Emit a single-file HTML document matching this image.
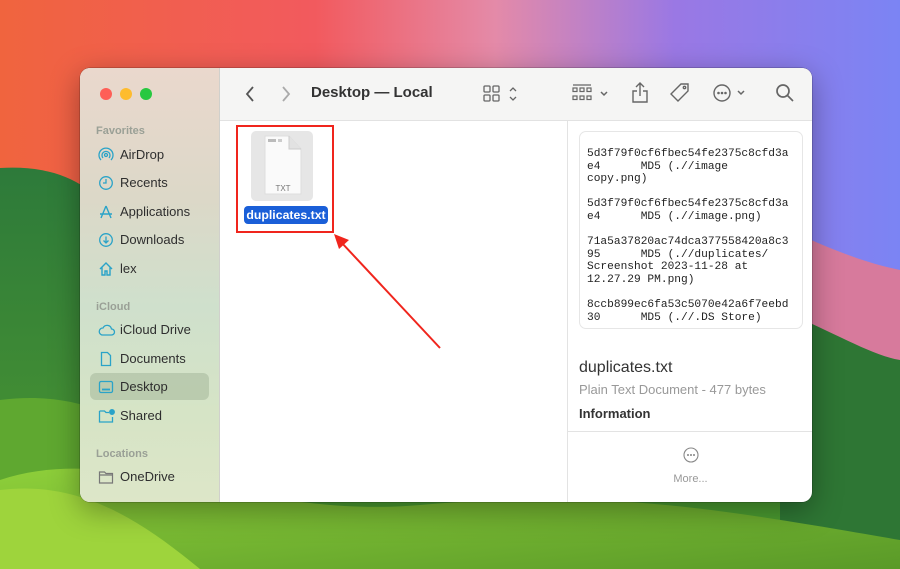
<!DOCTYPE html>
<html><head><meta charset="utf-8"><style>
*{margin:0;padding:0;box-sizing:border-box}
body{width:900px;height:569px;overflow:hidden;position:relative;font-family:"Liberation Sans",sans-serif;background:#3d8a3a}
#bg{position:absolute;left:0;top:0}
.win{position:absolute;left:80px;top:68px;width:732px;height:434px;border-radius:10px;overflow:hidden;background:#fff;box-shadow:0 8px 30px rgba(0,0,0,.35),0 0 0 .5px rgba(0,0,0,.3)}
.side{position:absolute;left:0;top:0;width:140px;height:434px;background:linear-gradient(180deg,#ead8cd 0%,#dcd8c8 30%,#cfe0cc 55%,#d6e4c6 80%,#dde6c8 100%);border-right:1px solid #d0d0cc}
.tb{position:absolute;left:140px;top:0;right:0;height:53px;background:#f5f5f4;border-bottom:1px solid #e2e2e2}
.dot{position:absolute;top:20px;width:12px;height:12px;border-radius:50%}
.sh{position:absolute;left:16px;font-size:11px;color:#9aa096;font-weight:bold}
.it{position:absolute;left:18px;font-size:13px;color:#2e2e2e;height:20px;line-height:20px}
.it svg{position:absolute;left:0;top:2px}
.it span{position:absolute;left:22px;white-space:nowrap}
.sel{position:absolute;left:10px;top:305px;width:119px;height:27px;background:rgba(120,140,110,.28);border-radius:6px}
.title{position:absolute;left:231px;top:16px;font-size:15px;font-weight:bold;color:#333}
.ic{position:absolute}
.prev{position:absolute;left:487px;top:53px;right:0;bottom:0;border-left:1px solid #e3e3e3}
.box{position:absolute;left:11px;top:10px;width:224px;height:198px;border:1px solid #e6e6e6;border-radius:7px;overflow:hidden;background:#fff}
.box pre{position:absolute;left:7px;top:16px;font-family:"Liberation Mono",monospace;font-size:11.2px;line-height:12.6px;color:#222}
</style></head><body>
<svg id="bg" width="900" height="569" viewBox="0 0 900 569">
<defs>
<linearGradient id="sky" x1="0" y1="0" x2="1" y2="0"><stop offset="0" stop-color="#f0643e"/><stop offset=".35" stop-color="#f25a5e"/><stop offset=".55" stop-color="#e48aa8"/><stop offset=".75" stop-color="#9a78e4"/><stop offset="1" stop-color="#7b84f4"/></linearGradient>
<linearGradient id="g1" x1="0" y1="0" x2="0" y2="1"><stop offset="0" stop-color="#2d7a3a"/><stop offset="1" stop-color="#4f9a30"/></linearGradient>
<linearGradient id="g2" x1="0" y1="0" x2="1" y2="1"><stop offset="0" stop-color="#8ecf3a"/><stop offset="1" stop-color="#5a9a28"/></linearGradient>
</defs>
<rect width="900" height="569" fill="url(#sky)"/>
<path d="M700 180 C780 230 850 260 900 270 L900 420 L700 420Z" fill="#d77a9c"/>
<rect x="0" y="400" width="900" height="169" fill="#4a9a30"/>
<path d="M0 168 C50 165 80 180 100 200 L100 569 L0 569Z" fill="url(#g1)"/>
<path d="M780 310 C830 330 870 355 900 360 L900 569 L780 569Z" fill="#2e7634"/>
<path d="M0 400 C40 395 70 400 100 410 L100 569 L0 569Z" fill="#5fa830"/>
<path d="M0 480 C120 440 250 520 420 505 C600 490 700 505 900 540 L900 569 L0 569Z" fill="url(#g2)"/>
<path d="M0 490 C80 480 140 520 200 569 L0 569Z" fill="#9ed43c"/>
</svg>
<div class="win">
<div class="side">
<div class="dot" style="left:20px;background:#fe5f57"></div>
<div class="dot" style="left:40px;background:#febc2e"></div>
<div class="dot" style="left:60px;background:#28c840"></div>
<div class="sh" style="top:57px">Favorites</div>
<div class="it" style="top:77px"><svg width="16" height="16" viewBox="0 0 16 16" fill="none" stroke="#2aa3c8" stroke-width="1.3"><circle cx="8" cy="8" r="1.5"/><path d="M5 11a4 4 0 1 1 6 0M3 13a7 7 0 1 1 10 0"/></svg><span>AirDrop</span></div>
<div class="it" style="top:105px"><svg width="16" height="16" viewBox="0 0 16 16" fill="none" stroke="#2aa3c8" stroke-width="1.3"><circle cx="8" cy="8" r="6.3"/><path d="M8 4v4H5"/></svg><span>Recents</span></div>
<div class="it" style="top:134px"><svg width="16" height="16" viewBox="0 0 16 16" fill="none" stroke="#2aa3c8" stroke-width="1.4"><path d="M8 2L3 14M8 2l5 12M2 10h12"/></svg><span>Applications</span></div>
<div class="it" style="top:162px"><svg width="16" height="16" viewBox="0 0 16 16" fill="none" stroke="#2aa3c8" stroke-width="1.3"><circle cx="8" cy="8" r="6.3"/><path d="M8 4.5v6M5.5 8.5L8 11l2.5-2.5"/></svg><span>Downloads</span></div>
<div class="it" style="top:191px"><svg width="16" height="16" viewBox="0 0 16 16" fill="none" stroke="#2aa3c8" stroke-width="1.4"><path d="M2 8L8 2l6 6M4 6.5V14h3v-4h2v4h3V6.5"/></svg><span>lex</span></div>
<div class="sh" style="top:233px">iCloud</div>
<div class="it" style="top:252px"><svg width="18" height="16" viewBox="0 0 18 16" fill="none" stroke="#2aa3c8" stroke-width="1.3"><path d="M4.5 13h9a3 3 0 0 0 0-6 4.5 4.5 0 0 0-8.5-1A3.5 3.5 0 0 0 4.5 13z"/></svg><span>iCloud Drive</span></div>
<div class="it" style="top:281px"><svg width="16" height="16" viewBox="0 0 16 16" fill="none" stroke="#2aa3c8" stroke-width="1.3"><path d="M3.5 1.5h6l3 3v10h-9z"/></svg><span>Documents</span></div>
<div class="sel"></div>
<div class="it" style="top:309px"><svg width="16" height="16" viewBox="0 0 16 16" fill="none" stroke="#2aa3c8" stroke-width="1.3"><rect x="1.5" y="2.5" width="13" height="11" rx="1.5"/><path d="M4 10.5h8" stroke-width="1.8"/></svg><span>Desktop</span></div>
<div class="it" style="top:338px"><svg width="18" height="16" viewBox="0 0 18 16" fill="none" stroke="#2aa3c8" stroke-width="1.3"><path d="M1.5 3h5l1.5 1.5H11M1.5 3v11h13V9"/><circle cx="14" cy="4" r="2.3" fill="#2aa3c8"/></svg><span>Shared</span></div>
<div class="sh" style="top:380px">Locations</div>
<div class="it" style="top:399px"><svg width="16" height="16" viewBox="0 0 16 16" fill="none" stroke="#777" stroke-width="1.2"><path d="M1.5 3h5l1.5 1.5h6.5V14h-13zM1.5 6h13"/></svg><span>OneDrive</span></div>
</div>
<div class="tb"></div>
<svg class="ic" style="left:164px;top:16px" width="12" height="20" viewBox="0 0 12 20" fill="none" stroke="#555" stroke-width="1.8"><path d="M9 3L3 10l6 7"/></svg>
<svg class="ic" style="left:200px;top:16px" width="12" height="20" viewBox="0 0 12 20" fill="none" stroke="#aaa" stroke-width="1.8"><path d="M3 3l6 7-6 7"/></svg>
<div class="title">Desktop — Local</div>
<svg class="ic" style="left:403px;top:16px" width="40" height="20" viewBox="0 0 40 20" fill="none" stroke="#666" stroke-width="1.3"><rect x="1" y="2" width="6" height="6" rx="1"/><rect x="10" y="2" width="6" height="6" rx="1"/><rect x="1" y="11" width="6" height="6" rx="1"/><rect x="10" y="11" width="6" height="6" rx="1"/><path d="M27 7l3-3 3 3M27 13l3 3 3-3"/></svg>
<svg class="ic" style="left:492px;top:16px" width="40" height="20" viewBox="0 0 40 20" fill="none" stroke="#666" stroke-width="1.2"><path d="M1 1h18"/><rect x="1" y="4" width="4" height="3.5"/><rect x="8" y="4" width="4" height="3.5"/><rect x="15" y="4" width="4" height="3.5"/><rect x="1" y="12" width="4" height="3.5"/><rect x="8" y="12" width="4" height="3.5"/><rect x="15" y="12" width="4" height="3.5"/><path d="M29 8l3 3 3-3" stroke-width="1.5"/></svg>
<svg class="ic" style="left:550px;top:13px" width="20" height="24" viewBox="0 0 20 24" fill="none" stroke="#666" stroke-width="1.4"><path d="M10 2v13M6 6l4-4 4 4M7 10H3v11h14V10h-4"/></svg>
<svg class="ic" style="left:589px;top:14px" width="22" height="22" viewBox="0 0 22 22" fill="none" stroke="#666" stroke-width="1.4"><path d="M12 2h7v7L9 19 2 12z"/><circle cx="15.5" cy="5.5" r="1.2"/></svg>
<svg class="ic" style="left:632px;top:15px" width="40" height="20" viewBox="0 0 40 20" fill="none" stroke="#666" stroke-width="1.4"><circle cx="10" cy="10" r="8"/><circle cx="6.5" cy="10" r=".6" fill="#666"/><circle cx="10" cy="10" r=".6" fill="#666"/><circle cx="13.5" cy="10" r=".6" fill="#666"/><path d="M26 8l3 3 3-3" stroke-width="1.5"/></svg>
<svg class="ic" style="left:695px;top:15px" width="20" height="20" viewBox="0 0 20 20" fill="none" stroke="#666" stroke-width="1.7"><circle cx="8" cy="8" r="6"/><path d="M12.5 12.5L18 18"/></svg>
<div style="position:absolute;left:171px;top:63px;width:62px;height:70px;background:#e6e6e6;border-radius:5px"></div>
<svg class="ic" style="left:183px;top:66px" width="40" height="64" viewBox="0 0 40 64"><path d="M2 2h24l12 13v45H2z" fill="#fafafa" stroke="#ddd"/><path d="M26 2v13h12" fill="#e2e2e2" stroke="#ccc"/><rect x="5" y="5" width="8" height="3" fill="#bbb"/><rect x="15" y="5" width="4" height="3" fill="#ccc"/><text x="20" y="57" font-size="8" text-anchor="middle" fill="#777" font-family="Liberation Sans">TXT</text></svg>
<div style="position:absolute;left:164px;top:138px;width:84px;height:18px;background:#1a5fd8;border-radius:4px;color:#fff;font-size:12.3px;font-weight:bold;text-align:center;line-height:18px;white-space:nowrap">duplicates.txt</div>
<div style="position:absolute;left:156px;top:57px;width:98px;height:108px;border:2px solid #f0251d"></div>
<svg class="ic" style="left:240px;top:160px" width="130" height="125" viewBox="0 0 130 125"><path d="M120 120L21 14" stroke="#f0251d" stroke-width="2"/><path d="M14 6l15 6-10 9z" fill="#f0251d"/></svg>
<div class="prev">
<div class="box"><pre>5d3f79f0cf6fbec54fe2375c8cfd3a
e4      MD5 (.//image
copy.png)

5d3f79f0cf6fbec54fe2375c8cfd3a
e4      MD5 (.//image.png)

71a5a37820ac74dca377558420a8c3
95      MD5 (.//duplicates/
Screenshot 2023-11-28 at
12.27.29 PM.png)

8ccb899ec6fa53c5070e42a6f7eebd
30      MD5 (.//.DS Store)</pre></div>
<div style="position:absolute;left:11px;top:238px;font-size:16px;color:#333">duplicates.txt</div>
<div style="position:absolute;left:11px;top:261px;font-size:13px;color:#999">Plain Text Document - 477 bytes</div>
<div style="position:absolute;left:11px;top:285px;font-size:13px;font-weight:bold;color:#333">Information</div>
<div style="position:absolute;left:0;right:0;top:310px;border-top:1px solid #e3e3e3"></div>
<svg class="ic" style="left:115px;top:326px" width="16" height="16" viewBox="0 0 16 16" fill="none" stroke="#888" stroke-width="1.1"><circle cx="8" cy="8" r="7"/><circle cx="5" cy="8" r=".5" fill="#888"/><circle cx="8" cy="8" r=".5" fill="#888"/><circle cx="11" cy="8" r=".5" fill="#888"/></svg>
<div style="position:absolute;left:0;width:245px;text-align:center;top:352px;font-size:11px;color:#999">More...</div>
</div>
</div>
</body></html>
